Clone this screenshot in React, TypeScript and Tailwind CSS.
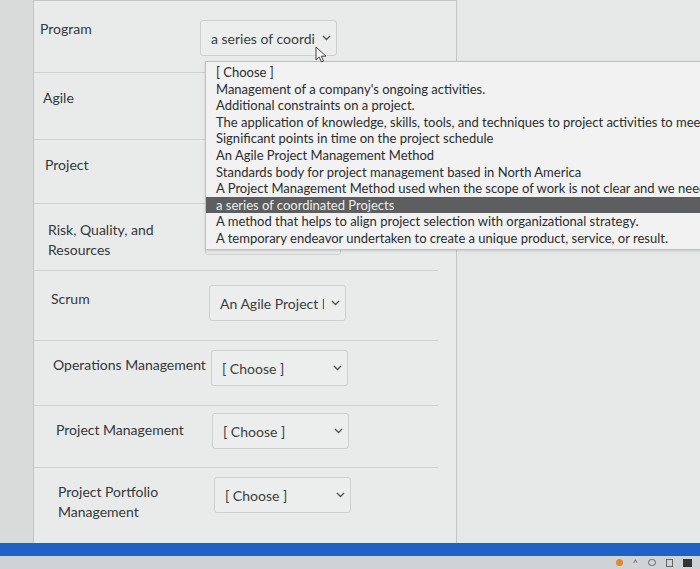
import React from "react";

type Row = {
  label: string[];
  value: string;
  h: number;
  labelX: number;
  labelTop: number;
  selX: number;
  selTop: number;
  hidden?: boolean;
};

const rows: Row[] = [
  { label: ["Program"], value: "a series of coordinated Projects", h: 66, labelX: 6, labelTop: 13, selX: 166, selTop: 14 },
  { label: ["Agile"], value: "[ Choose ]", h: 67, labelX: 9, labelTop: 15, selX: 169, selTop: 14, hidden: true },
  { label: ["Project"], value: "[ Choose ]", h: 64, labelX: 11, labelTop: 15, selX: 170, selTop: 14, hidden: true },
  { label: ["Risk, Quality, and", "Resources"], value: "[ Choose ]", h: 67, labelX: 14, labelTop: 16, selX: 172, selTop: 18, hidden: true },
  { label: ["Scrum"], value: "An Agile Project Management Method", h: 70, labelX: 17, labelTop: 18, selX: 175, selTop: 14 },
  { label: ["Operations Management"], value: "[ Choose ]", h: 65, labelX: 19, labelTop: 14, selX: 177, selTop: 9 },
  { label: ["Project Management"], value: "[ Choose ]", h: 62, labelX: 22, labelTop: 14, selX: 178, selTop: 7 },
  { label: ["Project Portfolio", "Management"], value: "[ Choose ]", h: 66, labelX: 24, labelTop: 14, selX: 180, selTop: 9 },
];

const options = [
  "[ Choose ]",
  "Management of a company's ongoing activities.",
  "Additional constraints on a project.",
  "The application of knowledge, skills, tools, and techniques to project activities to meet project requirements.",
  "Significant points in time on the project schedule",
  "An Agile Project Management Method",
  "Standards body for project management based in North America",
  "A Project Management Method used when the scope of work is not clear and we need to be flexible.",
  "a series of coordinated Projects",
  "A method that helps to align project selection with organizational strategy.",
  "A temporary endeavor undertaken to create a unique product, service, or result.",
];

function Chevron() {
  return (
    <svg width="9" height="6" viewBox="0 0 9 6" className="shrink-0">
      <path d="M1 1l3.5 3.5L8 1" fill="none" stroke="#555" strokeWidth="1.4" />
    </svg>
  );
}

export default function App() {
  return (
    <div className="relative w-[700px] h-[569px] overflow-hidden bg-[#e5e7e6] font-['Lato',sans-serif] text-[#2f3336]">
      <div className="flex h-[543px]">
        {/* left gutter */}
        <div className="w-[33px] bg-[#d9dbda]" />

        {/* question panel */}
        <div className="w-[424px] border-l border-r border-t border-[#c4c6c5] bg-[#e9ebea] pt-[5px]">
          {rows.map((r, i) => (
            <div
              key={i}
              className={`relative mr-[18px] ${i > 0 ? "border-t border-[#cfd1d0]" : ""}`}
              style={{ height: r.h }}
            >
              <div
                className="absolute text-[14px] leading-[20px] text-[#33383b]"
                style={{ left: r.labelX, top: r.labelTop }}
              >
                {r.label.map((l) => (
                  <div key={l}>{l}</div>
                ))}
              </div>
              {!r.hidden && (
                <div
                  className="absolute flex h-[36px] w-[137px] items-center justify-between rounded-[3px] border border-[#cdd0cf] bg-[#eceeed] pl-[10px] pr-[5px]"
                  style={{ left: r.selX, top: r.selTop }}
                >
                  <span className="w-[104px] overflow-hidden whitespace-nowrap text-[14px] text-[#3a3e40]">
                    {r.value}
                  </span>
                  <Chevron />
                </div>
              )}
            </div>
          ))}
        </div>

        <div className="flex-1 bg-[#e6e8e7]" />
      </div>

      {/* hidden select edge peeking under dropdown */}
      <div className="absolute left-[205px] top-[219px] h-[36px] w-[136px] rounded-[3px] border border-[#cdd0cf]" />

      {/* open dropdown list */}
      <div className="absolute left-[205px] top-[61px] w-[520px] border border-[#bfc1c0] bg-[#f1f2f1] py-[2px] shadow-sm">
        {options.map((o, i) => (
          <div
            key={i}
            className={`h-[16.6px] whitespace-nowrap pl-[10px] text-[13px] leading-[16.6px] ${
              i === 8 ? "bg-[#5c5e5f] text-[#eeeeee]" : "text-[#2b2d2e]"
            }`}
          >
            {o}
          </div>
        ))}
      </div>

      {/* mouse cursor */}
      <svg className="absolute left-[315px] top-[46px]" width="14" height="18" viewBox="0 0 14 18">
        <path d="M1 1v13l3.2-3 2.3 5 2-1-2.2-4.8H11z" fill="#f4f4f4" stroke="#444" strokeWidth="1" />
      </svg>

      {/* taskbar */}
      <div className="absolute left-0 right-0 top-[543px] h-[13px] bg-[#1f62c6]" />
      <div className="absolute left-0 right-0 top-[556px] flex h-[13px] items-center justify-end gap-[10px] bg-[#cfd3d6] pr-[8px]">
        <span className="h-[7px] w-[7px] rounded-full bg-[#e08a2c]" />
        <span className="text-[9px] leading-none text-[#555]">^</span>
        <span className="h-[7px] w-[8px] rounded-full border border-[#666]" />
        <span className="h-[8px] w-[7px] border border-[#666]" />
        <span className="h-[8px] w-[9px] bg-[#333]" />
      </div>
    </div>
  );
}
